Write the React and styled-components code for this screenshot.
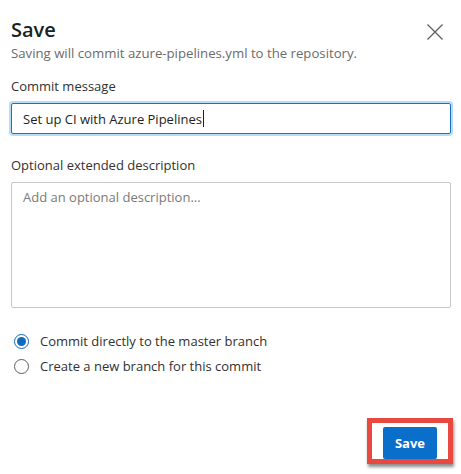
import React from 'react';
import styled, { createGlobalStyle } from 'styled-components';

const GlobalStyle = createGlobalStyle`
  html, body {
    margin: 0;
    padding: 0;
    background: #ffffff;
  }
  body {
    font-family: 'Open Sans', 'Noto Sans', sans-serif;
    color: #201f1e;
  }
`;

const Dialog = styled.div`
  width: 461px;
  height: 474px;
  box-sizing: border-box;
  padding: 16px 10px 0 11px;
  display: flex;
  flex-direction: column;
`;

const Header = styled.div`
  display: flex;
  justify-content: space-between;
  align-items: flex-start;
`;

const Title = styled.h1`
  margin: 0;
  font-size: 20px;
  line-height: 28px;
  font-weight: 600;
  color: #201f1e;
`;

const Subtitle = styled.div`
  font-size: 13.2px;
  line-height: 18px;
  color: #6b6b6b;
`;

const CloseButton = styled.button`
  border: none;
  background: none;
  padding: 0;
  margin: 7px 7px 0 0;
  width: 18px;
  height: 18px;
  display: flex;
  cursor: pointer;
`;

const Label = styled.div`
  font-size: 13px;
  line-height: 18px;
  color: #323130;
  margin-top: ${({ $top }) => $top}px;
`;

const TextInput = styled.div`
  margin-top: 8px;
  height: 31px;
  box-sizing: border-box;
  border: 1px solid #1f6fc0;
  border-radius: 2px;
  box-shadow: 0 0 0 2px #b9dcf5;
  padding: 0 11px;
  display: flex;
  align-items: center;
  font-size: 13px;
  color: #201f1e;
`;

const Caret = styled.span`
  display: inline-block;
  width: 1px;
  height: 17px;
  background: #201f1e;
  margin-left: 1px;
`;

const TextArea = styled.div`
  margin-top: 8px;
  height: 126px;
  box-sizing: border-box;
  border: 1px solid #c8c8c8;
  border-radius: 2px;
  padding: 5px 11px;
  font-size: 13px;
  line-height: 18px;
  color: #7a7a7a;
`;

const RadioGroup = styled.div`
  margin-top: 24px;
  display: flex;
  flex-direction: column;
  gap: 7px;
`;

const RadioRow = styled.label`
  display: flex;
  align-items: center;
  gap: 11px;
  font-size: 13px;
  line-height: 18px;
  color: #323130;
  padding-left: 3px;
`;

const RadioCircle = styled.span`
  width: 15px;
  height: 15px;
  box-sizing: border-box;
  border-radius: 50%;
  border: 1px solid ${({ $checked }) => ($checked ? '#0f6cbd' : '#605e5c')};
  display: flex;
  align-items: center;
  justify-content: center;
  &::after {
    content: '';
    width: 9px;
    height: 9px;
    border-radius: 50%;
    background: #0f6cbd;
    display: ${({ $checked }) => ($checked ? 'block' : 'none')};
  }
`;

const Footer = styled.div`
  margin-top: auto;
  padding-bottom: 10px;
  display: flex;
  justify-content: flex-end;
`;

const Highlight = styled.div`
  border: 5px solid #e8483f;
  padding: 4px 11px 0;
  background: #ffffff;
  box-shadow: 1px 3px 3px rgba(0, 0, 0, 0.45);
  margin-right: -2px;
`;

const PrimaryButton = styled.button`
  display: block;
  width: 54px;
  height: 32px;
  border: none;
  border-radius: 2px;
  background: #0a6fcb;
  color: #ffffff;
  font-family: 'Open Sans', 'Noto Sans', sans-serif;
  font-weight: 700;
  font-size: 13px;
  cursor: pointer;
`;

const CloseIcon = () => (
  <svg width="18" height="18" viewBox="0 0 18 18">
    <path d="M1.5 1.5 L16.5 16.5 M16.5 1.5 L1.5 16.5" stroke="#605e5c" strokeWidth="1.3" fill="none" />
  </svg>
);

export default function App() {
  return (
    <>
      <GlobalStyle />
      <Dialog>
        <Header>
          <div>
            <Title>Save</Title>
            <Subtitle>Saving will commit azure-pipelines.yml to the repository.</Subtitle>
          </div>
          <CloseButton aria-label="Close">
            <CloseIcon />
          </CloseButton>
        </Header>

        <Label $top={15}>Commit message</Label>
        <TextInput>
          Set up CI with Azure Pipelines
          <Caret />
        </TextInput>

        <Label $top={22}>Optional extended description</Label>
        <TextArea>Add an optional description...</TextArea>

        <RadioGroup>
          <RadioRow>
            <RadioCircle $checked />
            Commit directly to the master branch
          </RadioRow>
          <RadioRow>
            <RadioCircle />
            Create a new branch for this commit
          </RadioRow>
        </RadioGroup>

        <Footer>
          <Highlight>
            <PrimaryButton>Save</PrimaryButton>
          </Highlight>
        </Footer>
      </Dialog>
    </>
  );
}
